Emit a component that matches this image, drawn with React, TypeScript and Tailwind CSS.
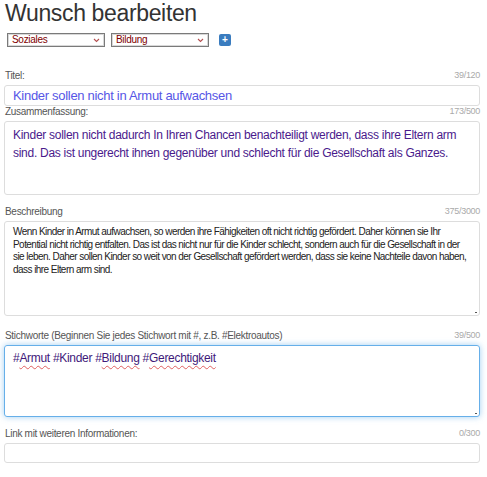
import React from "react";

function Chevron() {
  return (
    <svg width="7" height="5" viewBox="0 0 7 5" className="shrink-0">
      <path d="M1 1 L3.5 3.5 L6 1" fill="none" stroke="#b45050" strokeWidth="1.1" />
    </svg>
  );
}

function Select({ value }: { value: string }) {
  return (
    <div className="w-[98px] h-[14px] border border-[#7a7a7a] bg-white flex items-center justify-between pl-[4px] pr-[4px] shadow-[inset_0_0_0_1px_#d8d8d8]">
      <span className="text-[10px] leading-[12px] tracking-[-0.3px] text-[#800000]">{value}</span>
      <Chevron />
    </div>
  );
}

function LabelRow({ label, count }: { label: string; count: string }) {
  return (
    <div className="h-[15px] flex justify-between items-start">
      <span className="pl-[1px] text-[10px] leading-[11px] tracking-[-0.3px] text-[#555]">{label}</span>
      <span className="text-[9px] leading-[11px] tracking-[-0.3px] text-[#aaa]">{count}</span>
    </div>
  );
}

function Grip() {
  return <span className="absolute right-[2px] bottom-[2px] w-[2px] h-[1px] bg-[#555]" />;
}

function Sp({ children }: { children: React.ReactNode }) {
  return (
    <span className="underline decoration-wavy decoration-[#e06060] decoration-1 underline-offset-[3px]">
      {children}
    </span>
  );
}

export default function App() {
  return (
    <div className="w-[487px] min-h-[477px] bg-white font-['Liberation_Sans',Arial,sans-serif] text-[#333] pl-[4px] pr-[7px]">
      <h1 className="pl-[1px] text-[23px] leading-[26px] tracking-[-0.35px] text-[#333] font-normal">
        Wunsch bearbeiten
      </h1>
      <div className="mt-[7px] ml-[3px] flex items-center h-[14px]">
        <Select value="Soziales" />
        <div className="ml-[6px]">
          <Select value="Bildung" />
        </div>
        <div className="ml-[10px] w-[12px] h-[12px] rounded-[2px] bg-[#3a7cbf] flex items-center justify-center text-white text-[10px] leading-none font-bold">
          +
        </div>
      </div>

      <div className="mt-[23px]">
        <LabelRow label="Titel:" count="39/120" />
        <div className="h-[21px] border border-[#ddd] rounded-[3px] flex items-center px-[8px]">
          <span className="text-[13px] tracking-[-0.3px] text-[#5656e6] leading-[16px]">
            Kinder sollen nicht in Armut aufwachsen
          </span>
        </div>
      </div>

      <div>
        <LabelRow label="Zusammenfassung:" count="173/500" />
        <div className="relative h-[74px] border border-[#ddd] rounded-[3px] px-[8px] pt-[4px] text-[12px] leading-[18px] tracking-[-0.28px] text-[#4a1a8c]">
          <div>Kinder sollen nicht dadurch In Ihren Chancen benachteiligt werden, dass ihre Eltern arm</div>
          <div>sind. Das ist ungerecht ihnen gegenüber und schlecht für die Gesellschaft als Ganzes.</div>
        </div>
      </div>

      <div className="mt-[11px]">
        <LabelRow label="Beschreibung" count="375/3000" />
        <div className="relative h-[95px] border border-[#ddd] rounded-[3px] px-[8px] pt-[4px] text-[10px] leading-[12.5px] tracking-[-0.55px] text-[#222]">
          <div>Wenn Kinder in Armut aufwachsen, so werden ihre Fähigkeiten oft nicht richtig gefördert. Daher können sie Ihr</div>
          <div>Potential nicht richtig entfalten. Das ist das nicht nur für die Kinder schlecht, sondern auch für die Gesellschaft in der</div>
          <div>sie leben. Daher sollen Kinder so weit von der Gesellschaft gefördert werden, dass sie keine Nachteile davon haben,</div>
          <div>dass ihre Eltern arm sind.</div>
          <Grip />
        </div>
      </div>

      <div className="mt-[14px]">
        <LabelRow label="Stichworte (Beginnen Sie jedes Stichwort mit #, z.B. #Elektroautos)" count="39/500" />
        <div className="relative h-[72px] border border-[#66afe9] rounded-[3px] shadow-[0_0_6px_rgba(102,175,233,0.6)] px-[8px] pt-[3px] text-[12px] leading-[18px] tracking-[-0.3px] text-[#3f1a7a]">
          <div>
            #<Sp>Armut</Sp> #Kinder #<Sp>Bildung</Sp> #<Sp>Gerechtigkeit</Sp>
          </div>
          <Grip />
        </div>
      </div>

      <div className="mt-[11px]">
        <LabelRow label="Link mit weiteren Informationen:" count="0/300" />
        <div className="h-[20px] border border-[#ddd] rounded-[3px]" />
      </div>
    </div>
  );
}
